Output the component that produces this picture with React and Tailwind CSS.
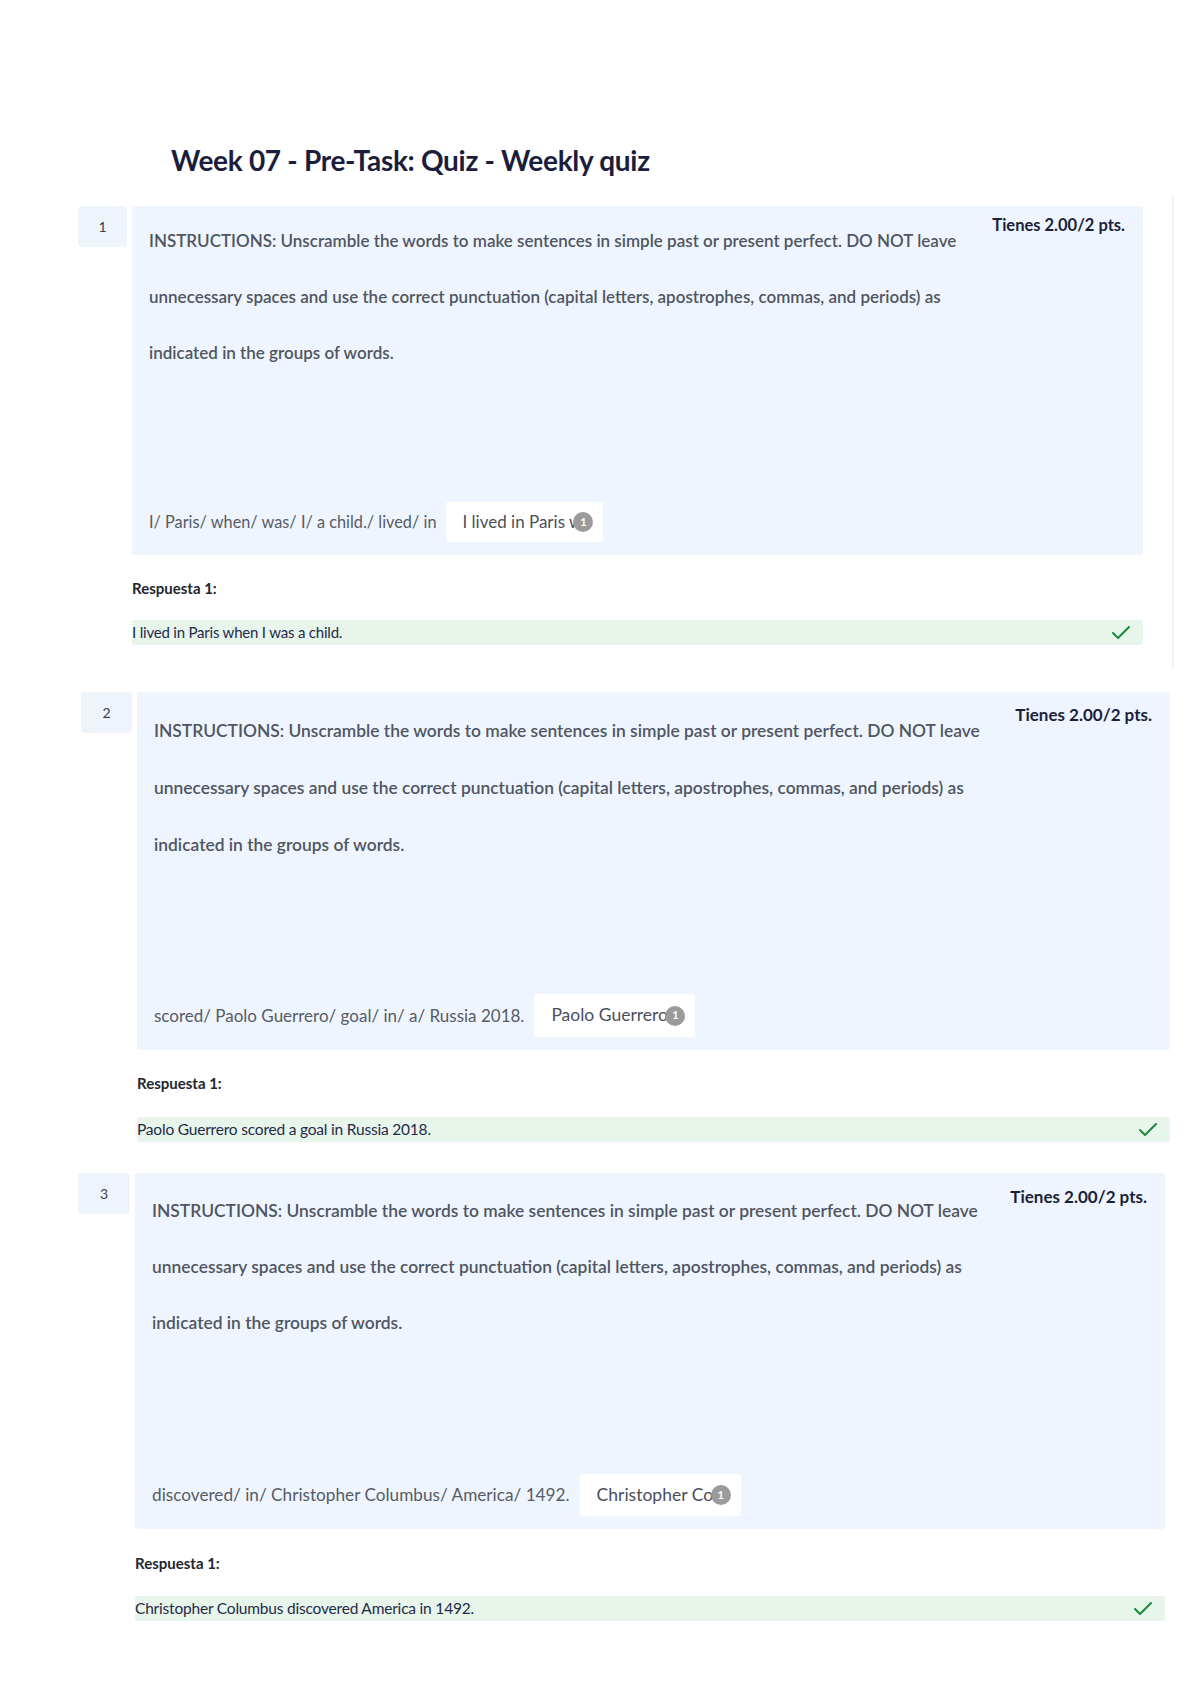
import React from 'react'
import { Check } from 'lucide-react'

const questions = [
  {
    n: 1,
    wrap: 'ml-[78px] mt-[17px] w-[1096px] pt-[11px] pb-[24px] border-r-2 border-[#eef4fc]',
    box: 'w-[49px]',
    col: 'w-[1011px]',
    cardPt: 'pt-[7px]',
    lead: 'leading-[56px] text-[17px]',
    tienes: 'text-[16.5px] mt-0',
    wordSize: 'text-[16.3px]',
    typedSize: 'text-[17px] pl-[16px]',
    ansSize: 'text-[15px]',
    rowGap: 'mt-[121px]',
    respMt: 'mt-[23px]',
    barMt: 'mt-[22px]',
    inputH: 'h-[40px]',
    inputW: 'w-[157px]',
    words: 'I/ Paris/ when/ was/ I/ a child./ lived/ in',
    typed: 'I lived in Paris when I was a child.',
    answer: 'I lived in Paris when I was a child.',
  },
  {
    n: 2,
    wrap: 'ml-[81px] mt-[23px] w-[1089px]',
    box: 'w-[51px]',
    col: 'w-[1033px]',
    cardPt: 'pt-[10px]',
    lead: 'leading-[57px] text-[17.4px]',
    tienes: 'text-[17px] mt-[1px]',
    wordSize: 'text-[17px]',
    typedSize: 'text-[17.5px] pl-[17px]',
    ansSize: 'text-[15.5px]',
    rowGap: 'mt-[121px]',
    respMt: 'mt-[23px]',
    barMt: 'mt-[24px]',
    inputH: 'h-[43px]',
    inputW: 'w-[161px]',
    words: 'scored/ Paolo Guerrero/ goal/ in/ a/ Russia 2018.',
    typed: 'Paolo Guerrero scored a goal in Russia 2018.',
    answer: 'Paolo Guerrero scored a goal in Russia 2018.',
  },
  {
    n: 3,
    wrap: 'ml-[78px] mt-[31px] w-[1087px]',
    box: 'w-[52px]',
    col: 'w-[1030px]',
    cardPt: 'pt-[10px]',
    lead: 'leading-[56px] text-[17.4px]',
    tienes: 'text-[17px] mt-[2px]',
    wordSize: 'text-[17.2px]',
    typedSize: 'text-[17.5px] pl-[17px]',
    ansSize: 'text-[15.5px]',
    rowGap: 'mt-[123px]',
    respMt: 'mt-[24px]',
    barMt: 'mt-[23px]',
    inputH: 'h-[42px]',
    inputW: 'w-[161px]',
    words: 'discovered/ in/ Christopher Columbus/ America/ 1492.',
    typed: 'Christopher Columbus discovered America in 1492.',
    answer: 'Christopher Columbus discovered America in 1492.',
  },
]

const Question = ({ q }) => {
  return (
    <div className={q.wrap}>
      <div className='flex gap-[5px]'>
        {/* number tab */}
        <div className={`${q.box} h-[41px] shrink-0 rounded-sm bg-[#eef4fc] flex items-center justify-center text-[14px] text-[#3a3f4b]`}>
          {q.n}
        </div>

        <div className={q.col}>
          <div className={`${q.cardPt} rounded-[3px] bg-[#eff5fe] pl-[17px] pr-[18px] pb-[13px]`}>
            <div className='flex justify-between'>
              <p className={`${q.lead} whitespace-nowrap font-semibold text-[#4f5562]`}>
                INSTRUCTIONS: Unscramble the words to make sentences in simple past or present perfect. DO NOT leave
                <br />
                unnecessary spaces and use the correct punctuation (capital letters, apostrophes, commas, and periods) as
                <br />
                indicated in the groups of words.
              </p>
              <p className={`${q.tienes} whitespace-nowrap font-bold leading-[24px] text-[#1b1f3b]`}>
                Tienes 2.00/2 pts.
              </p>
            </div>

            <div className={`${q.rowGap} flex items-center gap-[10px]`}>
              <span className={`${q.wordSize} whitespace-nowrap text-[#565b66]`}>{q.words}</span>
              <div className={`${q.inputW} ${q.inputH} ${q.typedSize} relative shrink-0 rounded-[3px] bg-white flex items-center`}>
                <div className='mr-[20px] overflow-hidden whitespace-nowrap text-[#4a4f5a]'>{q.typed}</div>
                <span className='absolute right-[10px] top-1/2 -translate-y-1/2 w-[20px] h-[20px] rounded-full bg-[#9b9b9b] text-white text-[11px] font-bold flex items-center justify-center'>
                  1
                </span>
              </div>
            </div>
          </div>

          <p className={`${q.respMt} text-[15px] font-bold leading-[20px] text-[#23262f]`}>Respuesta 1:</p>

          <div className={`${q.barMt} h-[25px] rounded-[3px] bg-[#e8f5eb] flex items-center justify-between pr-[10px]`}>
            <span className={`${q.ansSize} tracking-[-0.2px] text-[#1f2a4a]`}>{q.answer}</span>
            <Check size={24} strokeWidth={2} className='text-[#1c8a3e]' />
          </div>
        </div>
      </div>
    </div>
  )
}

const App = () => {
  return (
    <div className="min-h-[1696px] w-[1200px] bg-white font-['Lato','Noto_Sans',sans-serif]">
      <h1 className='pt-[142px] pl-[171px] text-[28px] font-bold leading-[36px] text-[#1a1e3c] tracking-[-0.3px]'>
        Week 07 - Pre-Task: Quiz - Weekly quiz
      </h1>

      {questions.map((q) => (
        <Question key={q.n} q={q} />
      ))}
    </div>
  )
}

export default App
